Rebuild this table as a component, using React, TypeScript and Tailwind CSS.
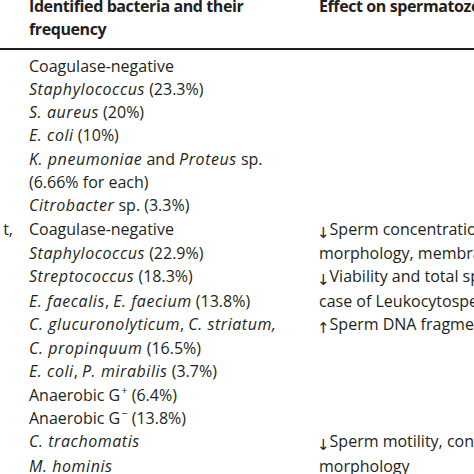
import React from "react";

const I = ({ children }: { children: React.ReactNode }) => <i className="italic tracking-[0.035em]">{children}</i>;
const Up = ({ c }: { c: string }) => (
  <span className="inline-block text-[11px] leading-none relative top-[-7px] ml-[1px]">{c}</span>
);
const Arr = ({ c }: { c: string }) => (
  <span className="inline-block text-[15px] relative top-[3px] ml-[-2px]" style={{ fontFamily: '"DejaVu Sans", sans-serif' }}>{c}</span>
);

const left: React.ReactNode[] = [
  <>Coagulase-negative</>,
  <><I>Staphylococcus</I> (23.3%)</>,
  <><I>S. aureus</I> (20%)</>,
  <><I>E. coli</I> (10%)</>,
  <><I>K. pneumoniae</I> and <I>Proteus</I> sp.</>,
  <>(6.66% for each)</>,
  <><I>Citrobacter</I> sp. (3.3%)</>,
  <>Coagulase-negative</>,
  <><I>Staphylococcus</I> (22.9%)</>,
  <><I>Streptococcus</I> (18.3%)</>,
  <><I>E. faecalis</I>, <I>E. faecium</I> (13.8%)</>,
  <><I>C. glucuronolyticum</I>, <I>C. striatum,</I></>,
  <><I>C. propinquum</I> (16.5%)</>,
  <><I>E. coli</I>, <I>P. mirabilis</I> (3.7%)</>,
  <>Anaerobic G<Up c="+" /> (6.4%)</>,
  <>Anaerobic G<Up c="−" /> (13.8%)</>,
  <><I>C. trachomatis</I></>,
  <><I>M. hominis</I></>,
];

const right: Record<number, React.ReactNode> = {
  7: <><Arr c="↓" />Sperm concentration,</>,
  8: <>morphology, membrane</>,
  9: <><Arr c="↓" />Viability and total sperm</>,
  10: <>case of Leukocytospermia</>,
  11: <><Arr c="↑" />Sperm DNA fragmentation</>,
  16: <><Arr c="↓" />Sperm motility, concentration,</>,
  17: <>morphology</>,
};

export default function App() {
  return (
    <div
      className="w-[474px] h-[474px] overflow-hidden bg-white text-[#231f20]"
      style={{ fontFamily: '"Open Sans", "Noto Sans", sans-serif' }}
    >
      <div className="w-[700px] mt-[-5px]">
        <div className="grid grid-cols-[29px_290px_1fr] font-bold text-[16px] leading-[23.3px] tracking-[-0.025em] pb-[6px] border-b-2 border-[#231f20]">
          <div />
          <div className="whitespace-nowrap">
            <div>Identified bacteria and their</div>
            <div>frequency</div>
          </div>
          <div className="whitespace-nowrap">Effect on spermatozoa</div>
        </div>
        <div className="grid grid-cols-[29px_290px_1fr] text-[16px] leading-[23.3px] pt-[5px]">
          {left.map((l, i) => (
            <React.Fragment key={i}>
              <div className="whitespace-nowrap overflow-hidden flex justify-end pr-[16px]">
                {i === 7 ? "t," : ""}
              </div>
              <div className="whitespace-nowrap">{l}</div>
              <div className="whitespace-nowrap">{right[i] ?? ""}</div>
            </React.Fragment>
          ))}
        </div>
      </div>
    </div>
  );
}
